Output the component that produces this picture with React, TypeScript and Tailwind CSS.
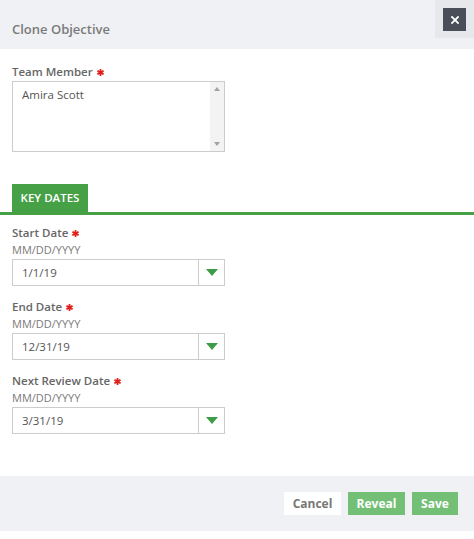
import React from "react";

const Req = () => (
  <svg width="7" height="7" viewBox="0 0 10 10" className="inline-block ml-[4px] align-middle -mt-[1px]">
    <g stroke="#e0201b" strokeWidth="2.6" strokeLinecap="round">
      <line x1="5" y1="1" x2="5" y2="9" />
      <line x1="1.5" y1="3" x2="8.5" y2="7" />
      <line x1="1.5" y1="7" x2="8.5" y2="3" />
    </g>
  </svg>
);

const DateField = ({ label, value, first }: { label: string; value: string; first?: boolean }) => (
  <div className={first ? "mt-[10px]" : "mt-[13px]"}>
    <div className="text-[11.5px] leading-[16px] font-semibold text-[#666]">
      {label}
      <Req />
    </div>
    <div className="text-[11px] leading-[16px] text-[#7a7a7a] mt-[1px]">MM/DD/YYYY</div>
    <div className="mt-[1px] w-[213px] h-[27px] border border-[#ccc] flex">
      <div className="flex-1 pl-[9px] flex items-center text-[11.5px] text-[#555]">{value}</div>
      <div className="w-[26px] border-l border-[#ccc] flex items-center justify-center">
        <svg width="12" height="7" viewBox="0 0 12 7">
          <polygon points="0,0 12,0 6,7" fill="#3e9b46" />
        </svg>
      </div>
    </div>
  </div>
);

export default function App() {
  return (
    <div
      className="w-[474px] h-[539px] bg-white flex flex-col relative overflow-hidden"
      style={{ fontFamily: '"Open Sans", "Noto Sans", sans-serif' }}
    >
      <div className="h-[49px] bg-[#f0f1f4] relative shrink-0">
        <div className="pl-3 pt-[20px] text-[13px] leading-[18px] font-semibold text-[#7b7b7b]">Clone Objective</div>
        <div className="absolute right-0 top-0 w-[39px] h-[38px] bg-[#e7e8eb] flex items-start pt-[8px] pl-[8px]">
          <div className="w-[23px] h-[23px] bg-[#4a4e58] flex items-center justify-center">
            <svg width="8" height="8" viewBox="0 0 8 8">
              <g stroke="#fff" strokeWidth="1.8" strokeLinecap="square">
                <line x1="1" y1="1" x2="7" y2="7" />
                <line x1="7" y1="1" x2="1" y2="7" />
              </g>
            </svg>
          </div>
        </div>
      </div>

      <div className="px-3">
        <div className="mt-[15px] text-[11.5px] leading-[16px] font-semibold text-[#666]">
          Team Member
          <Req />
        </div>
        <div className="mt-[1px] w-[213px] h-[71px] border border-[#ccc] flex">
          <div className="flex-1 pl-[9px] pt-[5px] text-[11.5px] leading-[16px] text-[#555]">Amira Scott</div>
          <div className="w-[14px] bg-[#f3f3f3] flex flex-col items-center justify-between py-[5px]">
            <svg width="6" height="4" viewBox="0 0 6 4">
              <polygon points="0,4 6,4 3,0" fill="#a3a3a3" />
            </svg>
            <svg width="6" height="4" viewBox="0 0 6 4">
              <polygon points="0,0 6,0 3,4" fill="#a3a3a3" />
            </svg>
          </div>
        </div>
      </div>

      <div className="mt-[32px] px-3">
        <div className="w-[76px] h-[28px] bg-[#45a046] text-white text-[11.5px] font-semibold flex items-center justify-center">
          KEY DATES
        </div>
      </div>
      <div className="h-[3px] bg-[#45a046]" />

      <div className="px-3">
        <DateField label="Start Date" value="1/1/19" first />
        <DateField label="End Date" value="12/31/19" />
        <DateField label="Next Review Date" value="3/31/19" />
      </div>

      <div className="absolute left-0 right-0 top-[476px] h-[55px] bg-[#f0f1f4] flex items-start justify-end pr-4 pt-[16px] gap-[7px]">
        <button className="w-[57px] h-[23px] bg-white text-[12px] font-bold text-[#777]">Cancel</button>
        <button className="w-[57px] h-[23px] bg-[#73bf76] text-[12px] font-bold text-white">Reveal</button>
        <button className="w-[46px] h-[23px] bg-[#73bf76] text-[12px] font-bold text-white">Save</button>
      </div>
    </div>
  );
}
